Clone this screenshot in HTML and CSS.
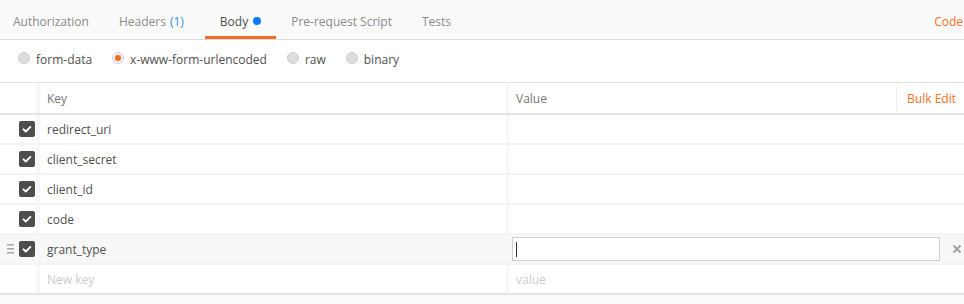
FILE: index.html
```html
<!DOCTYPE html>
<html>
<head>
<meta charset="utf-8">
<link rel="stylesheet" href="styles.css">
</head>
<body>
<div class="tabs">
  <div class="tab tab-first">Authorization</div>
  <div class="tab tab-headers">Headers <span class="count">(1)</span></div>
  <div class="tab active">Body <span class="dot"></span></div>
  <div class="tab">Pre-request Script</div>
  <div class="tab">Tests</div>
  <div class="spacer"></div>
  <div class="code">Code</div>
</div>
<div class="modes">
  <label class="mode"><span class="radio"></span>form-data</label>
  <label class="mode"><span class="radio checked"></span>x-www-form-urlencoded</label>
  <label class="mode"><span class="radio"></span>raw</label>
  <label class="mode"><span class="radio"></span>binary</label>
</div>
<div class="table">
  <div class="row head">
    <div class="c-check"></div>
    <div class="c-key">Key</div>
    <div class="c-val"><span class="val-label">Value</span><span class="bulk">Bulk Edit</span></div>
  </div>
  <div class="row">
    <div class="c-check"><span class="cb"><svg viewBox="0 0 16 16" width="16" height="16"><path d="M4.5 8.3l2.3 2.2 4.6-4.6" fill="none" stroke="#fff" stroke-width="1.8" stroke-linecap="round" stroke-linejoin="round"/></svg></span></div>
    <div class="c-key">redirect_uri</div>
    <div class="c-val"></div>
  </div>
  <div class="row">
    <div class="c-check"><span class="cb"><svg viewBox="0 0 16 16" width="16" height="16"><path d="M4.5 8.3l2.3 2.2 4.6-4.6" fill="none" stroke="#fff" stroke-width="1.8" stroke-linecap="round" stroke-linejoin="round"/></svg></span></div>
    <div class="c-key">client_secret</div>
    <div class="c-val"></div>
  </div>
  <div class="row">
    <div class="c-check"><span class="cb"><svg viewBox="0 0 16 16" width="16" height="16"><path d="M4.5 8.3l2.3 2.2 4.6-4.6" fill="none" stroke="#fff" stroke-width="1.8" stroke-linecap="round" stroke-linejoin="round"/></svg></span></div>
    <div class="c-key">client_id</div>
    <div class="c-val"></div>
  </div>
  <div class="row">
    <div class="c-check"><span class="cb"><svg viewBox="0 0 16 16" width="16" height="16"><path d="M4.5 8.3l2.3 2.2 4.6-4.6" fill="none" stroke="#fff" stroke-width="1.8" stroke-linecap="round" stroke-linejoin="round"/></svg></span></div>
    <div class="c-key">code</div>
    <div class="c-val"></div>
  </div>
  <div class="row hover">
    <div class="c-check">
      <span class="handle"><svg viewBox="0 0 7 10" width="7" height="10"><rect x="0" y="0" width="7" height="1.6" fill="#aaa"/><rect x="0" y="4" width="7" height="1.6" fill="#aaa"/><rect x="0" y="8" width="7" height="1.6" fill="#aaa"/></svg></span>
      <span class="cb"><svg viewBox="0 0 16 16" width="16" height="16"><path d="M4.5 8.3l2.3 2.2 4.6-4.6" fill="none" stroke="#fff" stroke-width="1.8" stroke-linecap="round" stroke-linejoin="round"/></svg></span>
    </div>
    <div class="c-key">grant_type</div>
    <div class="c-val edit">
      <div class="input"><span class="caret"></span></div>
      <span class="del"><svg viewBox="0 0 10 10" width="10" height="10"><path d="M1.5 1.5l7 7M8.5 1.5l-7 7" stroke="#a0a0a0" stroke-width="1.8" fill="none"/></svg></span>
    </div>
  </div>
  <div class="row last">
    <div class="c-check"></div>
    <div class="c-key ph">New key</div>
    <div class="c-val ph">value</div>
  </div>
</div>
</body>
</html>
```

FILE: styles.css
```css
html, body {
  margin: 0;
  padding: 0;
  background: #fbfbfb;
}
body {
  font-family: "Open Sans", "Noto Sans", sans-serif;
  font-size: 12px;
  color: #505050;
  width: 964px;
  height: 304px;
  overflow: hidden;
}
.tabs {
  height: 39px;
  display: flex;
  align-items: stretch;
  background: #fafafa;
  border-bottom: 1px solid #dcdcdc;
}
.tab {
  display: flex;
  align-items: center;
  padding: 6px 15px 0 15px;
  color: #8a8a8a;
  border-bottom: 3px solid transparent;
  white-space: nowrap;
}
.tab-first {
  padding-left: 13px;
}
.tab-headers {
  padding-right: 21px;
}
.count {
  color: #2d8fe6;
  margin-left: 4px;
}
.tab.active {
  color: #505050;
  border-bottom-color: #f26b2a;
}
.dot {
  display: inline-block;
  width: 8px;
  height: 8px;
  border-radius: 50%;
  background: #0a7bff;
  margin-left: 5px;
}
.spacer { flex: 1; }
.code {
  display: flex;
  align-items: center;
  padding-top: 6px;
  padding-bottom: 3px;
  color: #f47023;
  margin-right: 1px;
}
.modes {
  height: 43px;
  background: #fff;
  display: flex;
  align-items: center;
  padding-left: 18px;
  padding-bottom: 4px;
  border-bottom: 1px solid #e2e2e2;
  box-sizing: border-box;
}
.mode {
  display: flex;
  align-items: center;
  margin-right: 20px;
  color: #505050;
}
.radio {
  width: 10px;
  height: 10px;
  border-radius: 50%;
  background: #dedede;
  border: 1px solid #cfcfcf;
  margin-right: 6px;
  margin-top: -3px;
  box-sizing: content-box;
  position: relative;
}
.radio.checked {
  background: #f0f0f0;
  border-color: #d0d0d0;
}
.radio.checked::after {
  content: "";
  position: absolute;
  left: 2px;
  top: 2px;
  width: 6px;
  height: 6px;
  border-radius: 50%;
  background: #f26b2a;
}
.table {
  background: #fff;
}
.row {
  display: flex;
  height: 30px;
  box-sizing: border-box;
  border-bottom: 2px solid #f4f4f4;
}
.row.head {
  height: 32px;
  border-bottom: 2px solid #e4e4e4;
}
.row.head .c-key, .row.head .val-label {
  color: #777;
}
.row.hover {
  background: #f7f7f7;
}
.row.last {
  border-bottom: 2px solid #e4e4e4;
}
.c-check {
  border-right: 4px solid #f7f7f7;
  display: flex;
  align-items: center;
  justify-content: flex-end;
  padding-right: 1px;
  box-sizing: border-box;
  width: 40px;
  position: relative;
}
.cb {
  width: 16px;
  height: 16px;
  border-radius: 2px;
  background: #4d4d4d;
  display: flex;
  align-items: center;
  justify-content: center;
}
.handle {
  position: absolute;
  left: 7px;
  top: 9px;
  display: flex;
}
.c-key {
  width: 469px;
  display: flex;
  align-items: center;
  padding-left: 7px;
  box-sizing: border-box;
  border-right: 3px solid #f7f7f7;
}
.c-val {
  flex: 1;
  display: flex;
  align-items: center;
  padding-left: 7px;
}
.val-label { flex: 1; }
.bulk {
  color: #f47023;
  border-left: 1px solid #eeeeee;
  padding: 3px 8px 3px 10px;
}
.c-val.edit {
  padding-left: 3px;
}
.input {
  width: 428px;
  height: 24px;
  box-sizing: border-box;
  border: 1px solid #cfcfcf;
  background: #fff;
  display: flex;
  align-items: center;
  padding-left: 3px;
}
.caret {
  width: 1px;
  height: 15px;
  background: #333;
}
.del {
  margin-left: 12px;
  display: flex;
}
.ph {
  color: #cccccc;
}
```
